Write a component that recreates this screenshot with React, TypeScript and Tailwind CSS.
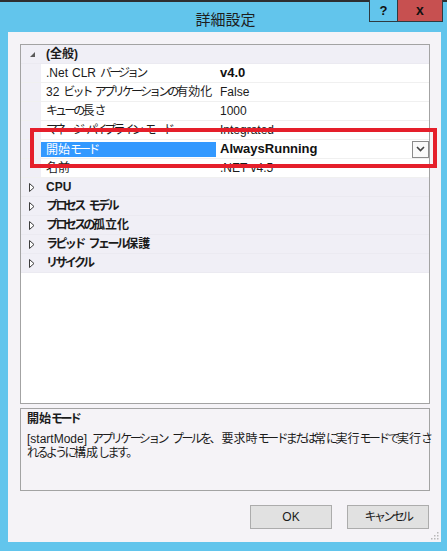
import React from "react";

const KANA = /([\u3040-\u30ff]+| )/;

// Meiryo UI draws kana narrower than kanji, so squeeze only the kana runs;
// its word spaces are a touch wider than Liberation's
const jp = (s: string, tight = true) => (
  <span className="whitespace-nowrap">
    {s.split(KANA).map((part, i) =>
      part === " " ? (
        <span key={i} className={tight ? "inline-block w-[4px]" : "inline-block w-[5px]"} />
      ) : KANA.test(part) ? (
        <span key={i} className={tight ? "tracking-[-2.9px]" : "tracking-[-2.6px]"}>
          {part}
        </span>
      ) : (
        <React.Fragment key={i}>{part}</React.Fragment>
      )
    )}
  </span>
);

type Row =
  | { type: "cat"; label: string; open?: boolean }
  | { type: "prop"; name: string; value: string; bold?: boolean; selected?: boolean };

const rows: Row[] = [
  { type: "cat", label: "(全般)", open: true },
  { type: "prop", name: ".Net CLR バージョン", value: "v4.0", bold: true },
  { type: "prop", name: "32 ビット アプリケーションの有効化", value: "False" },
  { type: "prop", name: "キューの長さ", value: "1000" },
  { type: "prop", name: "マネージ パイプライン モード", value: "Integrated" },
  { type: "prop", name: "開始モード", value: "AlwaysRunning", bold: true, selected: true },
  { type: "prop", name: "名前", value: ".NET v4.5" },
  { type: "cat", label: "CPU" },
  { type: "cat", label: "プロセス モデル" },
  { type: "cat", label: "プロセスの孤立化" },
  { type: "cat", label: "ラピッド フェール保護" },
  { type: "cat", label: "リサイクル" },
];

const Expander = ({ open }: { open?: boolean }) =>
  open ? (
    <svg width="7" height="7" viewBox="0 0 7 7">
      <polygon points="6,1 6,6 1,6" fill="#5a5a5a" />
    </svg>
  ) : (
    <svg width="6" height="9" viewBox="0 0 6 9">
      <polygon points="0.5,0.5 5,4.5 0.5,8.5" fill="#fff" stroke="#3c3c3c" strokeWidth="1" />
    </svg>
  );

const GridRow = ({ row }: { row: Row }) => {
  if (row.type === "cat") {
    return (
      <div className="flex h-[19px] items-center border-b border-[#ebeaf1] bg-[#f0eff6]">
        <div className="flex w-[20px] justify-center pl-[2px]">
          <Expander open={row.open} />
        </div>
        <div className="pl-[5px] text-[12px] font-bold text-[#1b1b1b]">{jp(row.label, false)}</div>
      </div>
    );
  }
  return (
    <div className="flex h-[19px] border-b border-[#f0f0f0]">
      <div className="w-[20px] bg-[#f0eff6]" />
      {row.selected ? (
        <div className="flex w-[175px] pt-[2px] pb-[1px]">
          <div className="flex flex-1 items-center bg-[#3399ff] pl-[5px] text-[12px] text-white">
            {jp(row.name)}
          </div>
        </div>
      ) : (
        <div className="flex w-[175px] items-center pl-[5px] text-[12px] text-[#1b1b1b]">
          {jp(row.name)}
        </div>
      )}
      <div className="flex flex-1 items-center pl-[4px]">
        <span
          className={
            row.bold ? "text-[13px] font-bold text-[#111]" : "text-[12px] text-[#1b1b1b]"
          }
        >
          {row.value}
        </span>
        {row.selected && (
          <div className="ml-auto flex h-[17px] w-[17px] items-center justify-center border border-[#8c8c8c] bg-[#fafafa]">
            <svg width="9" height="6" viewBox="0 0 9 6">
              <path d="M1 1 L4.5 4.5 L8 1" fill="none" stroke="#444" strokeWidth="1.6" />
            </svg>
          </div>
        )}
      </div>
    </div>
  );
};

export default function App() {
  return (
    <div className="relative flex h-[551px] w-[447px] flex-col overflow-hidden bg-[#62c5ec] font-['Liberation_Sans','Noto_Sans_CJK_JP',sans-serif]">
      <div className="h-[2px] bg-[#2e2e30]" />

      {/* title bar */}
      <div className="flex h-[30px] items-start justify-center pt-[9px] pl-[4px]">
        <span className="text-[15px] leading-[18px] text-[#1e1e1e]">詳細設定</span>
      </div>
      <div className="absolute top-0 left-[369px] flex h-[22px] border border-t-0 border-[#2e3a40]">
        <div className="flex w-[28px] items-center justify-center border-r border-[#2e3a40] bg-[#62c5ec] text-[13px] font-bold text-[#111]">
          ?
        </div>
        <div className="flex w-[44px] items-center justify-center bg-[#c75050] text-[14px] font-bold text-[#111]">
          x
        </div>
      </div>

      {/* client area */}
      <div className="relative ml-[8px] mr-[6px] flex h-[510px] flex-col bg-[#f5f3f7] pt-[12px] pl-[12px] pr-[11px]">
        <div className="flex h-[360px] flex-col border border-[#a3a3a3] bg-white">
          {rows.map((row, i) => (
            <GridRow key={i} row={row} />
          ))}
        </div>

        <div className="mt-[4px] h-[83px] border border-[#a3a3a3] bg-[#f5f3f7] pt-[3px] pl-[6px] text-[#1b1b1b]">
          <div className="mb-[6px] text-[12px] leading-[14px] font-bold">{jp("開始モード", false)}</div>
          <div className="text-[12px] leading-[14px]">
            {jp("[startMode] アプリケーション プールを、要求時モードまたは常に実行モードで実行さ", false)}
            <br />
            {jp("れるように構成します。", false)}
          </div>
        </div>

        <div className="mt-[14px] flex justify-end gap-[15px] pr-[1px]">
          <button className="flex h-[24px] w-[82px] items-center justify-center border border-[#acacac] bg-[#e1e1e1] text-[12px] text-[#1b1b1b]">
            OK
          </button>
          <button className="flex h-[24px] w-[82px] items-center justify-center border border-[#acacac] bg-[#e1e1e1] text-[12px] text-[#1b1b1b]">
            {jp("キャンセル", false)}
          </button>
        </div>

        <svg className="absolute right-[2px] bottom-[2px]" width="8" height="8" viewBox="0 0 8 8">
          <rect x="6" y="0" width="1.5" height="1.5" fill="#b8b8b8" />
          <rect x="3" y="3" width="1.5" height="1.5" fill="#b8b8b8" />
          <rect x="6" y="3" width="1.5" height="1.5" fill="#b8b8b8" />
          <rect x="0" y="6" width="1.5" height="1.5" fill="#b8b8b8" />
          <rect x="3" y="6" width="1.5" height="1.5" fill="#b8b8b8" />
          <rect x="6" y="6" width="1.5" height="1.5" fill="#b8b8b8" />
        </svg>
      </div>

      {/* red annotation frame */}
      <div className="absolute top-[128px] left-[30px] h-[40px] w-[407px] border-[4px] border-[#e51f2b]" />
    </div>
  );
}
